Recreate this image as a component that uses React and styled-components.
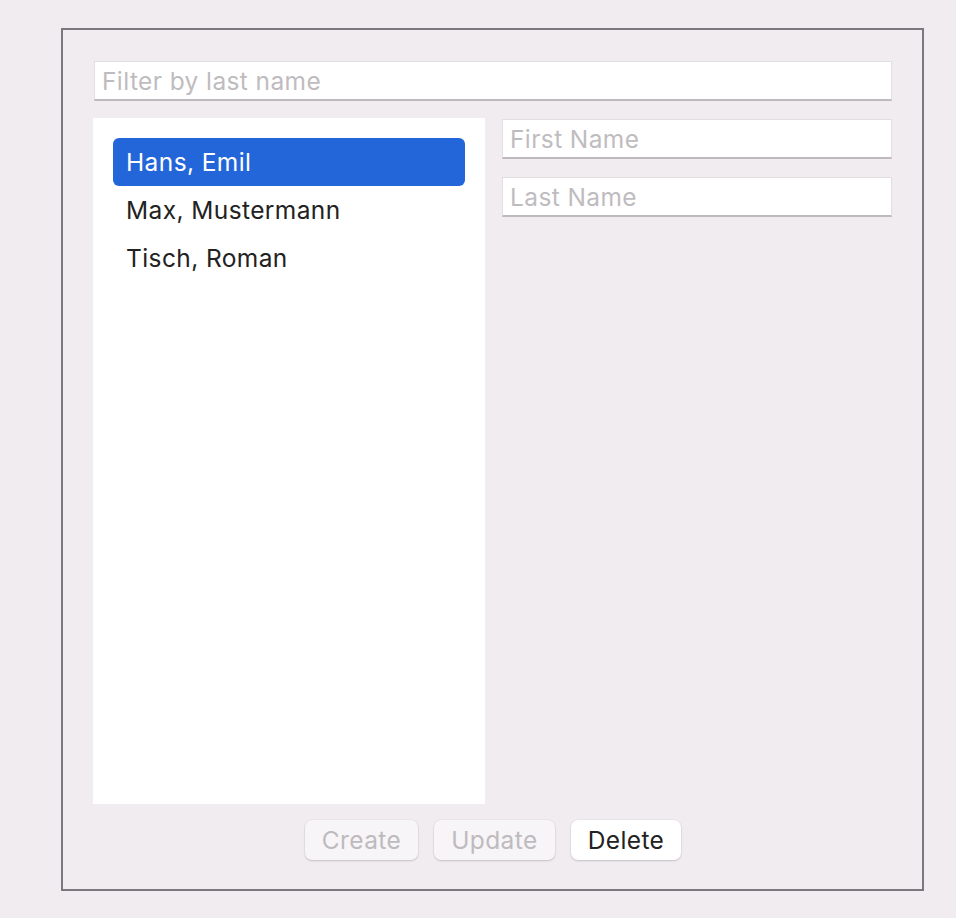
import React, { useState } from 'react'
import styled, { createGlobalStyle } from 'styled-components'

const GlobalStyle = createGlobalStyle`
  html, body {
    margin : 0;
    padding : 0;
    background : #f1ecf0;
    font-family : Inter, "Open Sans", "Liberation Sans", sans-serif;
  }
`
const Page = styled.div`
  padding : 28px 32px 26px 61px;
`
const Frame = styled.div`
  width : 863px;
  height : 863px;
  box-sizing : border-box;
  border : 2px solid #7c777c;
  padding : 31px 30px 29px 31px;
  display : flex;
  flex-direction : column;
`
const TextInput = styled.input`
  box-sizing : border-box;
  height : 40px;
  width : 100%;
  border : 1px solid #e2dee2;
  border-bottom : 2px solid #bdb9bd;
  background : #ffffff;
  padding : 0 7px;
  font-family : inherit;
  font-size : 24.5px;
  letter-spacing : 0.4px;
  color : #222;
  outline : none;
  &::placeholder {
    color : #bfbcbf;
  }
`
const Body = styled.div`
  flex : 1;
  display : flex;
  gap : 17px;
  margin-top : 17px;
  min-height : 0;
`
const List = styled.div`
  width : 392px;
  background : #ffffff;
  padding : 20px;
  box-sizing : border-box;
  margin-left : -1px;
`
const Row = styled.div`
  height : 48px;
  display : flex;
  align-items : center;
  padding-left : 13px;
  border-radius : 6px;
  font-size : 24.5px;
  letter-spacing : 0.4px;
  cursor : default;
  color : ${p => (p.$selected ? '#ffffff' : '#222222')};
  background : ${p => (p.$selected ? '#2266d9' : 'transparent')};
`
const Fields = styled.div`
  flex : 1;
  display : flex;
  flex-direction : column;
  gap : 18px;
  padding-top : 1px;
`
const Buttons = styled.div`
  display : flex;
  justify-content : center;
  gap : 16px;
  margin-top : 16px;
`
const Button = styled.button`
  height : 40px;
  padding : 0 17px;
  border : none;
  border-radius : 7px;
  font-family : inherit;
  font-size : 24.5px;
  letter-spacing : 0.4px;
  background : ${p => (p.disabled ? '#f7f5f7' : '#ffffff')};
  color : ${p => (p.disabled ? '#bebbbe' : '#222222')};
  box-shadow : 0 0 0 0.5px rgba(0, 0, 0, 0.06), 0 1px 2px rgba(0, 0, 0, 0.16);
  cursor : pointer;
`

const people = ['Hans, Emil', 'Max, Mustermann', 'Tisch, Roman']

const App = () => {
  const [selected, setSelected] = useState(0)
  return (
    <>
      <GlobalStyle />
      <Page>
        <Frame>
          <TextInput placeholder="Filter by last name" />
          <Body>
            <List>
              {people.map((name, i) => (
                <Row key={name} $selected={i === selected} onClick={() => setSelected(i)}>
                  {name}
                </Row>
              ))}
            </List>
            <Fields>
              <TextInput placeholder="First Name" />
              <TextInput placeholder="Last Name" />
            </Fields>
          </Body>
          <Buttons>
            <Button disabled>Create</Button>
            <Button disabled>Update</Button>
            <Button>Delete</Button>
          </Buttons>
        </Frame>
      </Page>
    </>
  )
}

export default App
